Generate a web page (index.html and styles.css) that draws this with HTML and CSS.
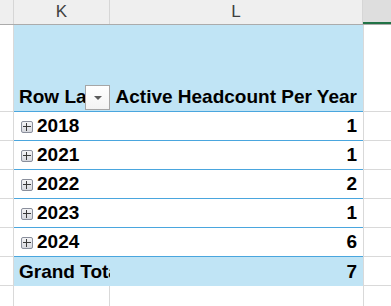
FILE: index.html
```html
<!DOCTYPE html>
<html lang="en">
<head>
  <meta charset="UTF-8">
  <title>Headcount Pivot</title>
  <link rel="stylesheet" href="styles.css">
</head>
<body>

  <!-- Column letters -->
  <div class="col-heads">
    <div class="corner"></div>
    <div class="col-head">K</div>
    <div class="col-head">L</div>
    <div class="col-head selected"></div>
  </div>

  <!-- Pivot table area -->
  <div class="grid">
    <div class="stub top"></div>
    <div class="band"></div>
    <div class="stub-r top"></div>

    <div class="stub"></div>
    <div class="cell label head">
      <span class="clip">Row Labels</span>
      <span class="filter-btn"><span class="arrow"></span></span>
    </div>
    <div class="cell value head">Active Headcount Per Year</div>
    <div class="stub-r"></div>

    <div class="stub"></div>
    <div class="cell label"><span class="expand"></span>2018</div>
    <div class="cell value">1</div>
    <div class="stub-r"></div>

    <div class="stub"></div>
    <div class="cell label"><span class="expand"></span>2021</div>
    <div class="cell value">1</div>
    <div class="stub-r"></div>

    <div class="stub"></div>
    <div class="cell label"><span class="expand"></span>2022</div>
    <div class="cell value">2</div>
    <div class="stub-r"></div>

    <div class="stub"></div>
    <div class="cell label"><span class="expand"></span>2023</div>
    <div class="cell value">1</div>
    <div class="stub-r"></div>

    <div class="stub"></div>
    <div class="cell label"><span class="expand"></span>2024</div>
    <div class="cell value">6</div>
    <div class="stub-r"></div>

    <div class="stub"></div>
    <div class="cell label total"><span class="clip">Grand Total</span></div>
    <div class="cell value total">7</div>
    <div class="stub-r"></div>

    <div class="stub"></div>
    <div class="empty k"></div>
    <div class="empty"></div>
    <div class="stub-r"></div>
  </div>

</body>
</html>
```

FILE: styles.css
```css
/* Page */
body {
  margin: 0;
  background-color: #ffffff;
  font-family: 'Liberation Sans', Arial, sans-serif;
  overflow: hidden;
}

/* Column letter bar */
.col-heads {
  display: grid;
  grid-template-columns: 14px 96px 253px 1fr;
  height: 24px;
  border-bottom: 1px solid #ababab;
  background-color: #efefef;
}

.corner {
  border-right: 1px solid #d6d6d6;
}

.col-head {
  display: flex;
  justify-content: center;
  align-items: center;
  font-size: 17px;
  color: #3f3f3f;
  border-right: 1px solid #d6d6d6;
}

.col-head.selected {
  border-right: none;
  background-color: #dedede;
  border-bottom: 2px solid #217346;
  height: 22px;
}

/* Sheet cells */
.grid {
  display: grid;
  grid-template-columns: 14px 96px 253px 1fr;
  grid-auto-rows: 29px;
  grid-template-rows: 58px;
}

.stub {
  border-right: 1px solid #d9d9d9;
  border-bottom: 1px solid #d9d9d9;
}

.stub-r {
  border-left: 1px solid #d9d9d9;
  border-bottom: 1px solid #d9d9d9;
}

.stub.top,
.stub-r.top {
  border-bottom: none;
}

.band {
  grid-column: span 2;
  background-color: #c0e4f5;
}

.cell {
  display: flex;
  align-items: flex-end;
  padding-bottom: 3px;
  font-size: 19px;
  font-weight: bold;
  color: #000000;
  border-bottom: 1px solid #4aa6de;
  white-space: nowrap;
  overflow: hidden;
  position: relative;
}

.cell.label {
  padding-left: 5px;
}

.cell.value {
  justify-content: flex-end;
  padding-right: 6px;
}

.cell.head,
.cell.total {
  background-color: #c0e4f5;
}

.cell.total {
  border-bottom: none;
}

.clip {
  overflow: hidden;
}

/* Expand / collapse box before each year */
.expand {
  width: 10px;
  height: 10px;
  margin: 0 4px 4px 2px;
  border: 1px solid #8a8f9c;
  border-radius: 2px;
  background: linear-gradient(#f4f4f6, #d6d8de);
  position: relative;
  flex-shrink: 0;
}

.expand::before,
.expand::after {
  content: '';
  position: absolute;
  background-color: #3a3a3a;
}

.expand::before {
  left: 1px;
  right: 1px;
  top: 4px;
  height: 1px;
}

.expand::after {
  top: 1px;
  bottom: 1px;
  left: 4px;
  width: 1px;
}

/* Filter dropdown sitting over the label cell */
.filter-btn {
  position: absolute;
  right: 0;
  top: 2px;
  width: 23px;
  height: 23px;
  border: 1px solid #a6a6a6;
  background: linear-gradient(#ffffff, #f3f3f3);
  display: flex;
  justify-content: center;
  align-items: center;
}

.filter-btn .arrow {
  width: 0;
  height: 0;
  border-left: 4px solid transparent;
  border-right: 4px solid transparent;
  border-top: 4px solid #5a5a5a;
}

/* Plain empty row under the table */
.empty {
  border-bottom: 1px solid #d9d9d9;
}

.empty.k {
  border-right: 1px solid #d9d9d9;
}
```
